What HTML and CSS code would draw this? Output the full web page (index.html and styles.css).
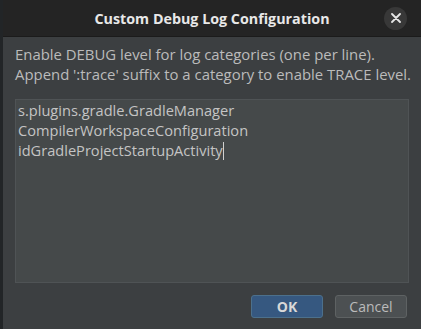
FILE: index.html
```html
<!DOCTYPE html>
<html lang="en">
<head>
    <meta charset="UTF-8">
    <title>Custom Debug Log Configuration</title>
    <link rel="stylesheet" href="styles.css">
</head>
<body>
    <div class="dialog">
        <div class="titlebar">
            <div></div>
            <div class="title">Custom Debug Log Configuration</div>
            <div class="close">
                <svg width="10" height="10" viewBox="0 0 10 10">
                    <path d="M1 1 L9 9 M9 1 L1 9" stroke="#e6e6e6" stroke-width="1.8" stroke-linecap="round"/>
                </svg>
            </div>
        </div>
        <div class="content">
            <div class="desc">
                Enable DEBUG level for log categories (one per line).<br>
                Append ':trace' suffix to a category to enable TRACE level.
            </div>
            <div class="editor">
                <div>s.plugins.gradle.GradleManager</div>
                <div>CompilerWorkspaceConfiguration</div>
                <div>idGradleProjectStartupActivity<span class="caret"></span></div>
            </div>
            <div class="buttons">
                <button class="btn btn-ok">OK</button>
                <button class="btn">Cancel</button>
            </div>
        </div>
    </div>
</body>
</html>
```
FILE: styles.css
```css
body {
    margin: 0;
    background: #3c3f41;
    font-family: "Open Sans", "DejaVu Sans", sans-serif;
}

.dialog {
    width: 421px;
    height: 329px;
    background: #3c3f41;
    border-left: 3px solid #222527;
    box-sizing: border-box;
    display: flex;
    flex-direction: column;
}

.titlebar {
    height: 37px;
    background: #242424;
    border-bottom: 1px solid #1b1b1b;
    box-sizing: border-box;
    display: grid;
    grid-template-columns: 40px 1fr 40px;
    align-items: center;
}

.title {
    text-align: center;
    color: #e8e8e8;
    font-weight: bold;
    font-size: 14.3px;
    padding-top: 1px;
}

.close {
    width: 23px;
    height: 23px;
    border-radius: 50%;
    background: #383838;
    display: flex;
    align-items: center;
    justify-content: center;
    margin-left: 3px;
}

.content {
    flex: 1;
    display: flex;
    flex-direction: column;
    padding: 7px 12px 10px 12px;
}

.desc {
    color: #bbbbbb;
    font-size: 14.9px;
    line-height: 20px;
    white-space: nowrap;
}

.editor {
    margin-top: 15px;
    height: 184px;
    box-sizing: border-box;
    background: #45494a;
    border: 1px solid #4f5355;
    padding: 0 2px;
    color: #c4c4c4;
    font-size: 14.6px;
    line-height: 20px;
}

.caret {
    display: inline-block;
    width: 1px;
    height: 18px;
    background: #d0d0d0;
    vertical-align: -4px;
}

.buttons {
    display: flex;
    justify-content: flex-end;
    gap: 12px;
    margin-top: 12px;
    padding-right: 2px;
}

.btn {
    width: 72px;
    height: 23px;
    border-radius: 3px;
    border: 1px solid #5e6263;
    background: #4c5052;
    color: #bbbbbb;
    font-family: inherit;
    font-size: 14px;
    padding: 0;
}

.btn-ok {
    background: #365880;
    border-color: #4c708c;
    color: #d8d8d8;
    font-weight: bold;
}
```
